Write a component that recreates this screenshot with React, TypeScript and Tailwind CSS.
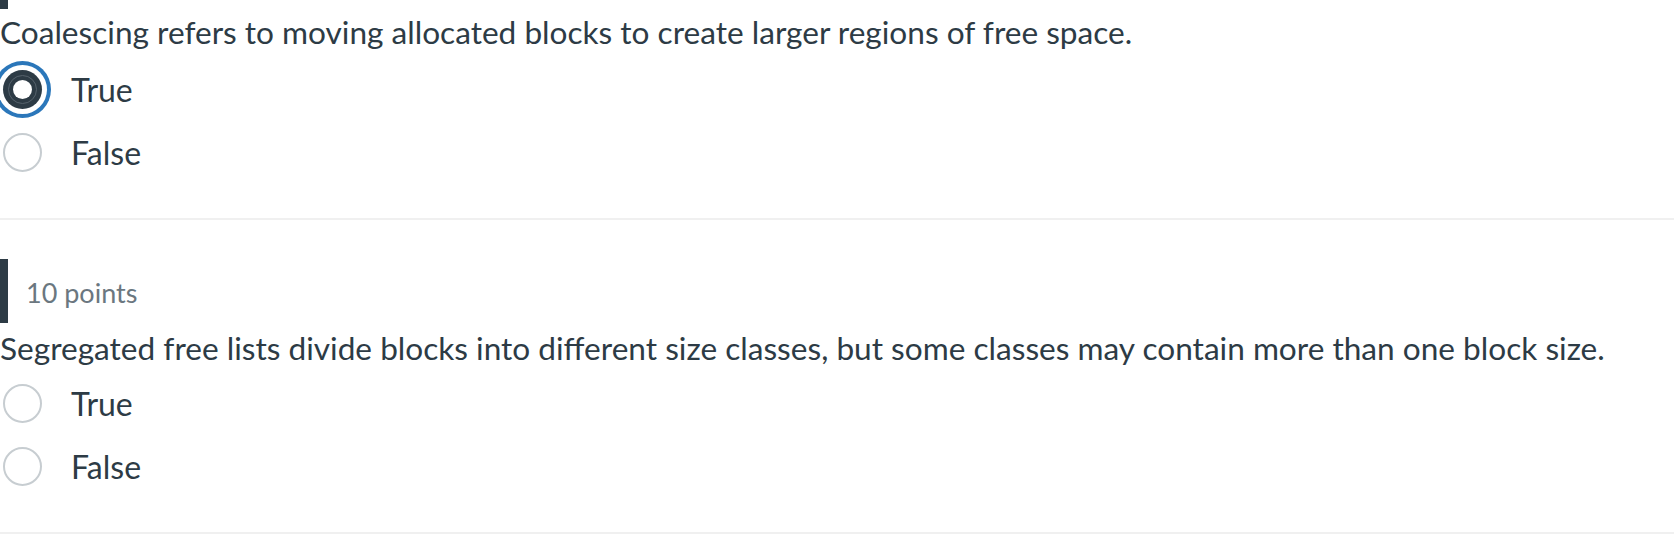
const font = { fontFamily: '"Lato", "Open Sans", sans-serif' };

type Option = { label: string; checked?: boolean };

function Radio({ checked }: { checked?: boolean }) {
  if (checked) {
    return (
      <span className="ml-[3px] flex h-[39px] w-[39px] shrink-0 items-center justify-center rounded-full bg-[#2d3b45] shadow-[0_0_0_5px_#ffffff,0_0_0_9px_#2b77ba]">
        <span className="flex h-[29px] w-[29px] items-center justify-center rounded-full border border-[#56626c]">
          <span className="h-[19px] w-[19px] rounded-full bg-white" />
        </span>
      </span>
    );
  }
  return <span className="ml-[3px] h-[39px] w-[39px] shrink-0 rounded-full border-2 border-[#c7cdd1] bg-white" />;
}

function Options({ options }: { options: Option[] }) {
  return (
    <div className="flex flex-col">
      {options.map((o) => (
        <label key={o.label} className="flex h-[63px] items-center gap-[29px]">
          <Radio checked={o.checked} />
          <span className="text-[32px] leading-[38px] text-[#2d3b45]">{o.label}</span>
        </label>
      ))}
    </div>
  );
}

export default function App() {
  return (
    <div className="h-[546px] w-[1674px] overflow-hidden bg-white" style={font}>
      {/* tail of previous question */}
      <div className="h-[9px] w-2 bg-[#2d3b45]" />
      <div className="border-b-2 border-[#f0f0f0] pb-[34px]">
        <p className="mt-[4px] mb-[7px] text-[31.6px] leading-[38px] text-[#2d3b45]">
          Coalescing refers to moving allocated blocks to create larger regions of free space.
        </p>
        <Options options={[{ label: "True", checked: true }, { label: "False" }]} />
      </div>

      <div className="mt-[39px] border-b-2 border-[#f0f0f0] pb-[34px]">
        <div className="flex h-[64px]">
          <div className="w-2 bg-[#2d3b45]" />
          <span className="pl-[18px] pt-[18px] text-[27px] leading-[32px] text-[#6b7780]">10 points</span>
        </div>
        <p className="mt-[6px] mb-[5px] text-[31.6px] leading-[38px] text-[#2d3b45]">
          Segregated free lists divide blocks into different size classes, but some classes may contain more than one block size.
        </p>
        <Options options={[{ label: "True" }, { label: "False" }]} />
      </div>
    </div>
  );
}
